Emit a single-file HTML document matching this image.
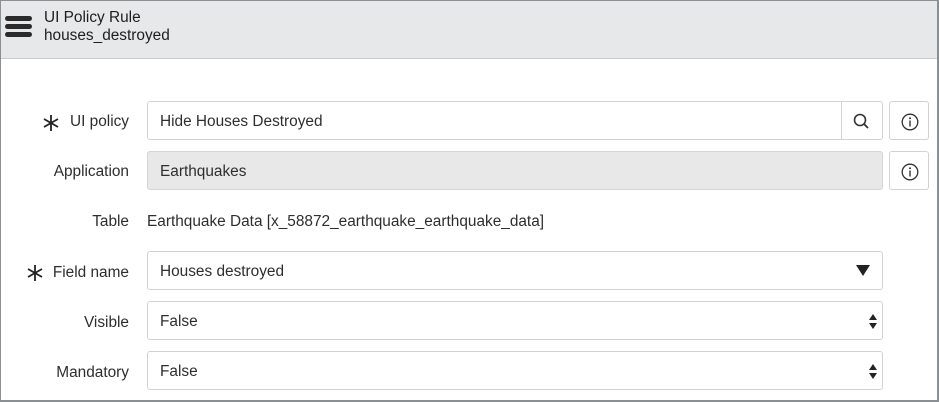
<!DOCTYPE html>
<html><head><style>
*{box-sizing:border-box;margin:0;padding:0}
body{width:939px;height:402px;background:#fff;font-family:"Liberation Sans",sans-serif;color:#2e2e2e;position:relative;overflow:hidden}
.frame{position:absolute;left:0;top:0;width:939px;height:402px;border:1px solid #8a8f94;border-width:1px 2px 2px 1px}
.hdr{position:absolute;left:1px;top:1px;width:936px;height:58px;background:#e6e8ea;border-bottom:1px solid #c8cccf}
.burger{position:absolute;left:4px;top:15px;width:27px}
.burger div{height:5px;background:#2b2b2b;border-radius:2.5px;margin-bottom:3px}
.t1{position:absolute;left:43px;top:8px;font-size:15.4px;color:#1e1e1e}
.t2{position:absolute;left:43px;top:26px;font-size:15.4px;color:#1e1e1e}
.lbl{position:absolute;right:810px;font-size:15.4px;text-align:right;white-space:nowrap}
.star{position:absolute}
.box{position:absolute;left:147px;width:736px;height:39px;border:1px solid #cfd3d6;border-radius:3px;font-size:15.4px;padding:0 12px;line-height:39px;background:#fff}
.ro{background:#e8e8e8;border-color:#d5d5d5}
.ib{position:absolute;left:889px;width:40px;height:39px;border:1px solid #cfd3d6;border-radius:3px;background:#fff}
.ib svg{position:absolute;left:11px;top:11px}
</style></head><body>
<div class="frame"></div>
<div class="hdr">
<div class="burger"><div></div><div></div><div></div></div>
<div class="t1">UI Policy Rule</div>
<div class="t2">houses_destroyed</div>
</div>

<svg class="star" style="left:42px;top:114px" width="18" height="18"><g stroke="#222" stroke-width="1.8"><line x1="9" y1="1" x2="9" y2="17"/><line x1="2" y1="5" x2="16" y2="13"/><line x1="2" y1="13" x2="16" y2="5"/></g></svg>
<div class="lbl" style="top:113px">UI policy</div>
<div class="box" style="top:101px">Hide Houses Destroyed
<div style="position:absolute;right:0;top:0;width:41px;height:37px;border-left:1px solid #cfd3d6">
<svg width="41" height="37"><circle cx="18" cy="18" r="5.5" fill="none" stroke="#333" stroke-width="1.6"/><line x1="22" y1="22" x2="26" y2="26" stroke="#333" stroke-width="1.8"/></svg></div></div>
<div class="ib" style="top:101px"><svg width="18" height="18"><circle cx="9" cy="9" r="7.8" fill="none" stroke="#333" stroke-width="1.3"/><circle cx="9" cy="5.3" r="1" fill="#333"/><rect x="8.3" y="7.5" width="1.4" height="6" fill="#333"/></svg></div>

<div class="lbl" style="top:163px">Application</div>
<div class="box ro" style="top:151px">Earthquakes</div>
<div class="ib" style="top:151px"><svg width="18" height="18"><circle cx="9" cy="9" r="7.8" fill="none" stroke="#333" stroke-width="1.3"/><circle cx="9" cy="5.3" r="1" fill="#333"/><rect x="8.3" y="7.5" width="1.4" height="6" fill="#333"/></svg></div>

<div class="lbl" style="top:213px">Table</div>
<div style="position:absolute;left:147px;top:213px;font-size:15.4px">Earthquake Data [x_58872_earthquake_earthquake_data]</div>

<svg class="star" style="left:26px;top:264px" width="18" height="18"><g stroke="#222" stroke-width="1.8"><line x1="9" y1="1" x2="9" y2="17"/><line x1="2" y1="5" x2="16" y2="13"/><line x1="2" y1="13" x2="16" y2="5"/></g></svg>
<div class="lbl" style="top:264px">Field name</div>
<div class="box" style="top:251px">Houses destroyed
<svg style="position:absolute;right:12px;top:13px" width="14" height="12"><polygon points="0,0 14,0 7,11" fill="#222"/></svg></div>

<div class="lbl" style="top:314px">Visible</div>
<div class="box" style="top:301px">False
<svg style="position:absolute;right:5px;top:12px" width="8" height="15"><polygon points="4,0 8,6 0,6" fill="#222"/><polygon points="0,9 8,9 4,15" fill="#222"/></svg></div>

<div class="lbl" style="top:364px">Mandatory</div>
<div class="box" style="top:351px">False
<svg style="position:absolute;right:5px;top:12px" width="8" height="15"><polygon points="4,0 8,6 0,6" fill="#222"/><polygon points="0,9 8,9 4,15" fill="#222"/></svg></div>
</body></html>
